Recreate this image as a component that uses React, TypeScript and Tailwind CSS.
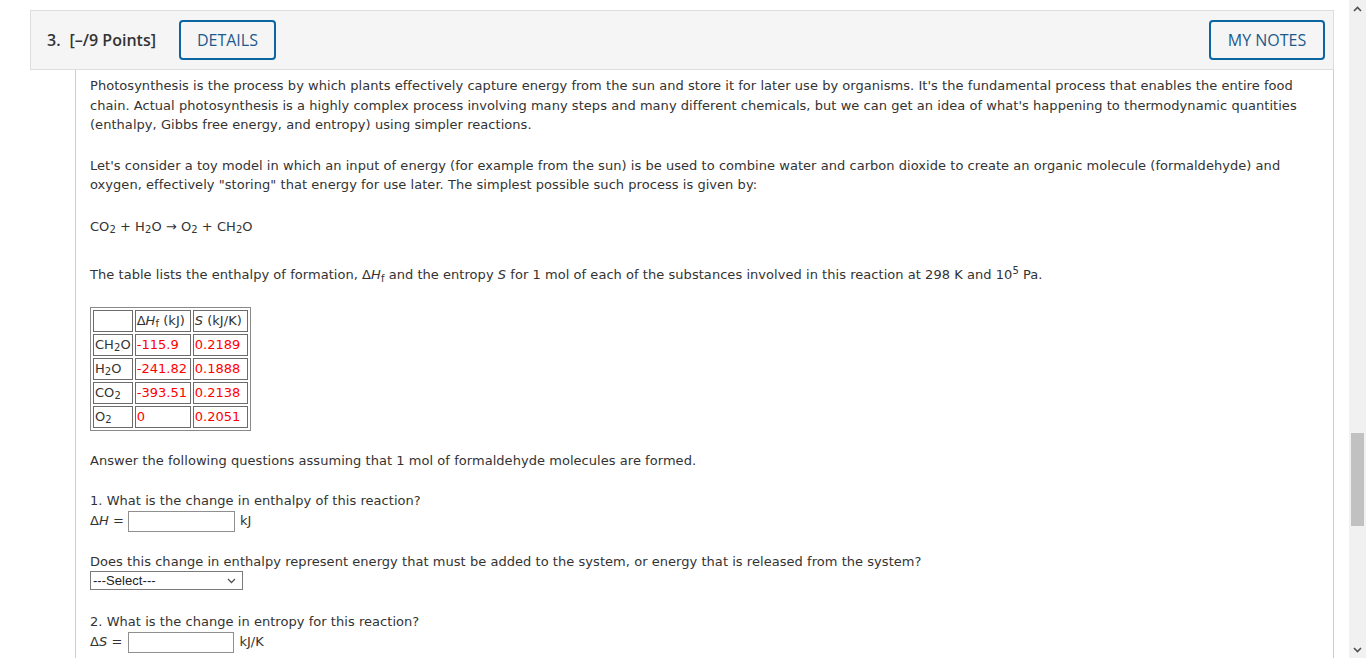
import React from 'react';

const body = "font-[family-name:'DejaVu_Sans',Verdana,sans-serif] text-[13px] leading-[19.5px] tracking-[0.045px] text-[#333]";

function Sub({ children }: { children: React.ReactNode }) {
  return <sub className="text-[10px]">{children}</sub>;
}

const rows = [
  { name: <>CH<Sub>2</Sub>O</>, h: '-115.9', s: '0.2189' },
  { name: <>H<Sub>2</Sub>O</>, h: '-241.82', s: '0.1888' },
  { name: <>CO<Sub>2</Sub></>, h: '-393.51', s: '0.2138' },
  { name: <>O<Sub>2</Sub></>, h: '0', s: '0.2051' },
];

function Cell({ children, red, w }: { children?: React.ReactNode; red?: boolean; w?: string }) {
  return (
    <td className={`border border-[#6b6b6b] px-px py-0 leading-[20px] whitespace-nowrap ${red ? 'text-[#ff0000]' : ''} ${w ?? ''}`}>
      {children}
    </td>
  );
}

function Scrollbar() {
  return (
    <div className="flex w-[17px] shrink-0 flex-col bg-[#f1f1f1]">
      <div className="flex h-[17px] items-center justify-center">
        <svg width="9" height="6" viewBox="0 0 9 6"><path d="M1 5 L4.5 1.5 L8 5" fill="none" stroke="#505050" strokeWidth="1.6" /></svg>
      </div>
      <div className="h-[416px]" />
      <div className="mx-[2px] h-[93px] bg-[#c1c1c1]" />
      <div className="flex-1" />
      <div className="flex h-[17px] items-center justify-center">
        <svg width="9" height="6" viewBox="0 0 9 6"><path d="M1 1 L4.5 4.5 L8 1" fill="none" stroke="#505050" strokeWidth="1.6" /></svg>
      </div>
    </div>
  );
}

export default function App() {
  return (
    <div className="flex h-[658px] w-[1366px] overflow-hidden bg-white">
      <main className="min-w-0 flex-1 pl-[30px] pr-[15px] pt-[10px]">
        {/* Question header */}
        <div className="flex h-[60px] items-center border border-[#dddddd] bg-[#f5f5f5] pl-[16px] pr-[8px] font-[family-name:'Open_Sans',sans-serif]">
          <span className="text-[16px] font-semibold text-[#333]">3.</span>
          <span className="ml-[9px] text-[16px] font-semibold text-[#333]">[–/9 Points]</span>
          <button className="ml-[23px] h-[40px] w-[97px] rounded-[4px] border-2 border-[#0b65a0] text-[16px] text-[#1d5a8c]">DETAILS</button>
          <button className="ml-auto h-[40px] w-[116px] rounded-[4px] border-2 border-[#0b65a0] text-[16px] text-[#1d5a8c]">MY NOTES</button>
        </div>

        {/* Question body */}
        <div className={`ml-[45px] h-[600px] border-x border-[#cccccc] px-[14px] pt-[6px] ${body}`}>
          <p>
            Photosynthesis is the process by which plants effectively capture energy from the sun and store it for later use by organisms. It's the fundamental process that enables the entire food chain. Actual photosynthesis is a highly complex process involving many steps and many different chemicals, but we can get an idea of what's happening to thermodynamic quantities (enthalpy, Gibbs free energy, and entropy) using simpler reactions.
          </p>
          <p className="mt-[21px]">
            Let's consider a toy model in which an input of energy (for example from the sun) is be used to combine water and carbon dioxide to create an organic molecule (formaldehyde) and oxygen, effectively "storing" that energy for use later. The simplest possible such process is given by:
          </p>
          <p className="mt-[22px]">
            CO<Sub>2</Sub> + H<Sub>2</Sub>O → O<Sub>2</Sub> + CH<Sub>2</Sub>O
          </p>
          <p className="mt-[29px]">
            The table lists the enthalpy of formation, Δ<i>H</i><Sub>f</Sub> and the entropy <i>S</i> for 1 mol of each of the substances involved in this reaction at 298 K and 10<sup className="text-[10px]">5</sup> Pa.
          </p>

          <table className="mt-[22px] border-separate border-spacing-[2px] border border-[#8a8a8a]">
            <tbody>
              <tr>
                <Cell w="w-[39px]" />
                <Cell w="w-[56px]">Δ<i>H</i><Sub>f</Sub> (kJ)</Cell>
                <Cell w="w-[55px]"><i>S</i> (kJ/K)</Cell>
              </tr>
              {rows.map((r, i) => (
                <tr key={i}>
                  <Cell>{r.name}</Cell>
                  <Cell red>{r.h}</Cell>
                  <Cell red>{r.s}</Cell>
                </tr>
              ))}
            </tbody>
          </table>

          <p className="mt-[20px]">Answer the following questions assuming that 1 mol of formaldehyde molecules are formed.</p>

          <p className="mt-[21px]">1. What is the change in enthalpy of this reaction?</p>
          <div className="flex h-[21px] items-center">
            <span>Δ<i>H</i> =</span>
            <input className="ml-[4px] h-[21px] w-[107px] border border-[#8f8f8f] bg-white" />
            <span className="ml-[5px]">kJ</span>
          </div>

          <p className="mt-[20px]">Does this change in enthalpy represent energy that must be added to the system, or energy that is released from the system?</p>
          <div className="flex h-[19px] w-[153px] items-center justify-between border border-[#7a7a7a] bg-white pl-[2px] pr-[6px] font-[family-name:'Liberation_Sans',Arial,sans-serif] text-[13px] text-[#222]">
            <span>---Select---</span>
            <svg width="9" height="6" viewBox="0 0 9 6"><path d="M1 1 L4.5 4.5 L8 1" fill="none" stroke="#555" strokeWidth="1.3" /></svg>
          </div>

          <p className="mt-[22px]">2. What is the change in entropy for this reaction?</p>
          <div className="flex h-[21px] items-center">
            <span>Δ<i>S</i> =</span>
            <input className="ml-[6px] h-[21px] w-[106px] border border-[#8f8f8f] bg-white" />
            <span className="ml-[5px]">kJ/K</span>
          </div>
        </div>
      </main>
      <Scrollbar />
    </div>
  );
}
